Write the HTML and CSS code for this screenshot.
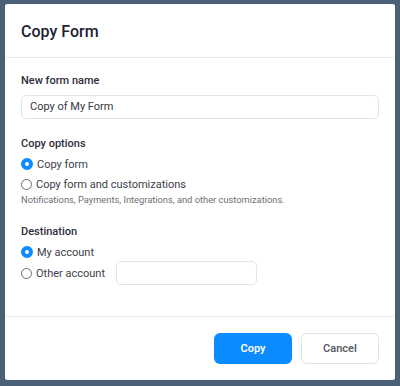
FILE: index.html
```html
<!DOCTYPE html>
<html>
<head>
<meta charset="utf-8">
<link rel="stylesheet" href="styles.css">
</head>
<body>
<div class="dialog">
  <div class="header">Copy Form</div>
  <div class="body">
    <div class="label">New form name</div>
    <div class="input wide">Copy of My Form</div>

    <div class="label section">Copy options</div>
    <div class="radio-row first"><span class="radio on"></span>Copy form</div>
    <div class="radio-row"><span class="radio"></span>Copy form and customizations</div>
    <div class="help">Notifications, Payments, Integrations, and other customizations.</div>

    <div class="label section dest">Destination</div>
    <div class="radio-row first"><span class="radio on"></span>My account</div>
    <div class="radio-row other"><span class="radio"></span>Other account<div class="input small"></div></div>
  </div>
  <div class="footer">
    <button class="btn primary">Copy</button>
    <button class="btn secondary">Cancel</button>
  </div>
</div>
</body>
</html>
```

FILE: styles.css
```css
html, body {
  margin: 0;
  padding: 0;
}
body {
  background: #4b6076;
  width: 400px;
  height: 386px;
  padding: 4px 5px;
  box-sizing: border-box;
  font-family: Roboto, "Noto Sans", sans-serif;
  color: #2b2f3a;
}
.dialog {
  background: #fff;
  width: 390px;
  height: 376px;
  border-radius: 2px;
  display: flex;
  flex-direction: column;
}
.header {
  height: 54px;
  box-sizing: border-box;
  padding: 18px 16px 0;
  font-size: 16px;
  font-weight: 500;
  color: #1c2232;
  border-bottom: 1px solid #e8e8f0;
}
.body {
  padding: 16px 16px 0;
  flex: 1;
}
.label {
  font-size: 11px;
  font-weight: 500;
  color: #2b2f3a;
  line-height: 14px;
}
.label.section {
  margin-top: 18px;
}
.label.dest {
  margin-top: 19px;
}
.input {
  border: 1px solid #e3e3ee;
  border-radius: 5px;
  box-sizing: border-box;
  font-size: 11px;
  color: #343842;
}
.input.wide {
  margin-top: 7px;
  height: 24px;
  padding: 4px 8px;
  line-height: 14px;
}
.radio-row {
  display: flex;
  align-items: center;
  font-size: 11px;
  color: #3c404a;
  height: 20px;
}
.radio-row.first {
  margin-top: 3px;
}
.radio-row.other {
  height: 22px;
}
.radio {
  width: 9px;
  height: 9px;
  border-radius: 50%;
  border: 1.5px solid #666a73;
  margin-right: 4px;
  flex: none;
}
.radio.on {
  border: 4px solid #0a8bff;
  width: 4px;
  height: 4px;
}
.help {
  font-size: 9.3px;
  color: #6b6f78;
  line-height: 12px;
}
.input.small {
  width: 141px;
  height: 24px;
  margin-left: 11px;
}
.footer {
  border-top: 1px solid #e8e8f0;
  height: 64px;
  box-sizing: border-box;
  display: flex;
  justify-content: flex-end;
  align-items: center;
  padding: 0 16px 0 0;
  gap: 9px;
}
.btn {
  width: 78px;
  height: 31px;
  border-radius: 6px;
  font-family: Roboto, "Noto Sans", sans-serif;
  font-size: 11px;
  font-weight: 600;
  cursor: pointer;
}
.btn.primary {
  background: #0a8bff;
  color: #fff;
  border: none;
}
.btn.secondary {
  background: #fff;
  border: 1px solid #e1e1ea;
  color: #5a5e68;
}
```
